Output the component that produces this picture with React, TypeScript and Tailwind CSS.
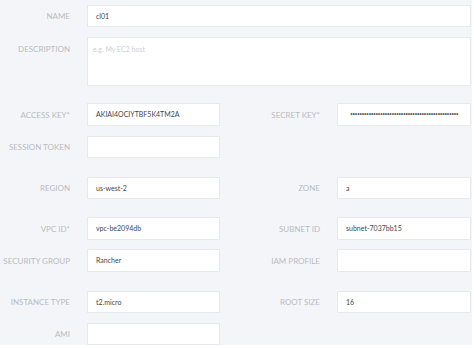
import React from "react";

const lbl = "text-right text-[8px] uppercase text-[#b9bcc1] whitespace-nowrap leading-none";
const box = "h-full w-full border border-[#e7e9ee] bg-white px-[8px] text-[7px] text-[#45474c] outline-none flex items-center whitespace-nowrap";

function Box({ value }: { value?: string }) {
  return <div className={box}>{value ? <span>{value}</span> : null}</div>;
}

function Row({ h, mt, children }: { h: number; mt: string; children: React.ReactNode }) {
  return (
    <div className={`grid grid-cols-[70px_133px_83px_134px] gap-x-[17px] items-center ${mt}`} style={{ height: h }}>
      {children}
    </div>
  );
}

export default function App() {
  return (
    <div className="w-[474px] h-[348px] bg-white" style={{ fontFamily: "Lato, 'Open Sans', sans-serif" }}>
      <div className="w-[472px] h-[345px] bg-[#f4f5f8] pt-[5px]">
        <div className="grid grid-cols-[70px_384px] gap-x-[17px] items-center h-[22px]">
          <div className={lbl}>Name</div>
          <Box value="cl01" />
        </div>
        <div className="grid grid-cols-[70px_384px] gap-x-[17px] items-start h-[49px] mt-[10px]">
          <div className={`${lbl} pt-[8px]`}>Description</div>
          <div className="h-full w-full border border-[#e7e9ee] bg-white px-[5px] pt-[6px] text-[7px] text-[#cdcfd3]">e.g. My EC2 host</div>
        </div>
        <Row h={23} mt="mt-[17px]">
          <div className={lbl}>Access Key*</div>
          <Box value="AKIAI4OCIYTBF5K4TM2A" />
          <div className={lbl}>Secret Key*</div>
          <div className={`${box} pl-[12px]`}>
            <span className="text-[5px] tracking-[-0.6px] text-[#666]">{"•".repeat(47)}</span>
          </div>
        </Row>
        <Row h={22} mt="mt-[10px]">
          <div className={lbl}>Session Token</div>
          <Box />
          <div />
          <div />
        </Row>
        <Row h={22} mt="mt-[19px]">
          <div className={lbl}>Region</div>
          <Box value="us-west-2" />
          <div className={lbl}>Zone</div>
          <Box value="a" />
        </Row>
        <Row h={23} mt="mt-[18px]">
          <div className={lbl}>VPC ID*</div>
          <Box value="vpc-be2094db" />
          <div className={lbl}>Subnet ID</div>
          <Box value="subnet-7037bb15" />
        </Row>
        <Row h={23} mt="mt-[9px]">
          <div className={lbl}>Security Group</div>
          <Box value="Rancher" />
          <div className={lbl}>IAM Profile</div>
          <Box />
        </Row>
        <Row h={22} mt="mt-[19px]">
          <div className={lbl}>Instance Type</div>
          <Box value="t2.micro" />
          <div className={lbl}>Root Size</div>
          <Box value="16" />
        </Row>
        <Row h={22} mt="mt-[10px]">
          <div className={lbl}>AMI</div>
          <Box />
          <div />
          <div />
        </Row>
      </div>
    </div>
  );
}
